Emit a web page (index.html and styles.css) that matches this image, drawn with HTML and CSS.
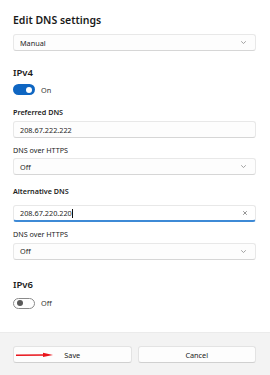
FILE: index.html
```html
<!DOCTYPE html>
<html>
<head>
<meta charset="utf-8">
<link rel="stylesheet" href="styles.css">
</head>
<body>
<div class="dialog">
  <div class="content">
    <h1 class="title">Edit DNS settings</h1>
    <div class="select sel-manual"><span>Manual</span><svg class="chev" width="7" height="5" viewBox="0 0 7 5"><path d="M1.2 1.3 L3.5 3.5 L5.8 1.3" fill="none" stroke="#8a8a8a" stroke-width="0.8"/></svg></div>

    <h2 class="section ipv4">IPv4</h2>
    <div class="toggle-row t4">
      <span class="toggle on"><span class="knob"></span></span><span class="toggle-label">On</span>
    </div>

    <div class="label strong pref">Preferred DNS</div>
    <div class="input"><span>208.67.222.222</span></div>

    <div class="label doh d1">DNS over HTTPS</div>
    <div class="select"><span>Off</span><svg class="chev" width="7" height="5" viewBox="0 0 7 5"><path d="M1.2 1.3 L3.5 3.5 L5.8 1.3" fill="none" stroke="#8a8a8a" stroke-width="0.8"/></svg></div>

    <div class="label strong alt">Alternative DNS</div>
    <div class="input focused"><span>208.67.220.220<span class="caret"></span></span><svg class="clear" width="6" height="6" viewBox="0 0 6 6"><path d="M1.2 1.2 L4.8 4.8 M4.8 1.2 L1.2 4.8" stroke="#7a7a7a" stroke-width="0.8"/></svg></div>

    <div class="label doh d2">DNS over HTTPS</div>
    <div class="select"><span>Off</span><svg class="chev" width="7" height="5" viewBox="0 0 7 5"><path d="M1.2 1.3 L3.5 3.5 L5.8 1.3" fill="none" stroke="#8a8a8a" stroke-width="0.8"/></svg></div>

    <h2 class="section ipv6">IPv6</h2>
    <div class="toggle-row t6">
      <span class="toggle off"><span class="knob"></span></span><span class="toggle-label">Off</span>
    </div>
  </div>
  <div class="footer">
    <button class="btn save"><svg class="arrow" width="40" height="6" viewBox="0 0 40 6"><path d="M1 3.3 L30 2.9" stroke="#e8141b" stroke-width="1.5"/><path d="M28 0.8 L38 3 L28 5 Z" fill="#e8141b"/></svg>Save</button>
    <button class="btn">Cancel</button>
  </div>
</div>
</body>
</html>
```

FILE: styles.css
```css
* { box-sizing: border-box; }
html, body { margin: 0; padding: 0; background: #ffffff; }
body {
  width: 270px;
  height: 375px;
  font-family: "Noto Sans", "Open Sans", sans-serif;
  color: #1b1b1b;
  overflow: hidden;
}
.dialog {
  width: 270px;
  height: 375px;
  display: flex;
  flex-direction: column;
  background: #fff;
}
.content {
  flex: 1;
  padding: 14px 14px 0 13px;
  display: flex;
  flex-direction: column;
}
.title {
  margin: 0;
  font-size: 10.5px;
  font-weight: 600;
  line-height: 12px;
  color: #1a1a1a;
}
.select, .input {
  height: 17px;
  flex: none;
  border: 1px solid #e8e8e8;
  border-bottom-color: #d6d6d6;
  border-radius: 3px;
  background: #fdfdfd;
  display: flex;
  align-items: center;
  justify-content: space-between;
  padding: 0 8px 0 6px;
  font-size: 7.3px;
  color: #262626;
}
.sel-manual { margin-top: 8px; }
.chev { display: block; }
.section {
  margin: 0;
  font-size: 9.5px;
  font-weight: 600;
  line-height: 12px;
  color: #1a1a1a;
}
.ipv4 { margin-top: 16px; }
.ipv6 { margin-top: 19px; }
.toggle-row {
  display: flex;
  align-items: center;
  height: 11px;
  flex: none;
}
.t4 { margin-top: 5px; }
.t6 { margin-top: 7px; }
.toggle {
  width: 22px;
  height: 11px;
  border-radius: 6px;
  position: relative;
  display: inline-block;
}
.toggle.on { background: #0f66c2; }
.toggle.off { background: #fff; border: 1px solid #8a8a8a; }
.knob {
  position: absolute;
  width: 6px;
  height: 6px;
  border-radius: 50%;
  top: 2.5px;
}
.toggle.on .knob { background: #fff; right: 3px; }
.toggle.off .knob { background: #5a5a5a; left: 3px; top: 1.5px; }
.toggle-label {
  margin-left: 6px;
  font-size: 7.3px;
  color: #333;
}
.label {
  font-size: 7.2px;
  line-height: 10px;
  color: #222;
}
.label.strong { font-weight: 600; }
.pref { margin-top: 12px; }
.pref + .input { margin-top: 4px; }
.d1 { margin-top: 6.5px; }
.d2 { margin-top: 7px; }
.doh + .select { margin-top: 3.5px; }
.alt { margin-top: 11px; }
.alt + .input { margin-top: 9px; }
.input.focused {
  border-bottom: 2px solid #3e8ad6;
  background: #fff;
}
.caret {
  display: inline-block;
  width: 1px;
  height: 9px;
  background: #111;
  vertical-align: middle;
  margin-left: 0.5px;
}
.clear { display: block; margin-right: -1px; }
.footer {
  height: 43px;
  flex: none;
  background: #f3f3f3;
  border-top: 1px solid #ebebeb;
  display: flex;
  gap: 6px;
  padding: 13px 14px 0 13px;
}
.btn {
  position: relative;
  flex: 1;
  height: 17px;
  border: 1px solid #e3e3e3;
  border-bottom-color: #d0d0d0;
  border-radius: 3px;
  background: #fdfdfd;
  font-family: inherit;
  font-size: 7.3px;
  color: #222;
  padding: 0;
}
.arrow {
  position: absolute;
  left: 1px;
  top: 5px;
}
```
